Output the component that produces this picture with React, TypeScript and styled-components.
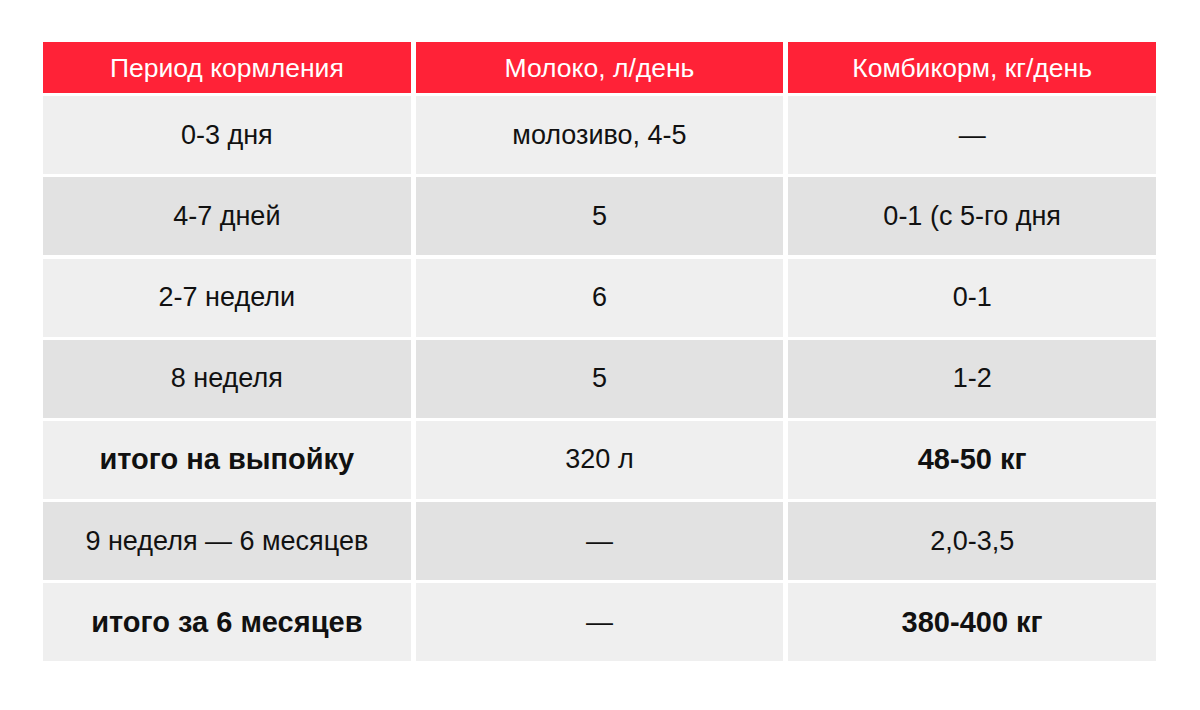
import React from "react";
import styled, { createGlobalStyle } from "styled-components";

const GlobalStyle = createGlobalStyle`
  html, body {
    margin: 0;
    padding: 0;
    background: #ffffff;
  }
  body {
    font-family: "Liberation Sans", Arial, sans-serif;
  }
`;

type Row = {
  period: string;
  milk: string;
  feed: string;
  boldPeriod?: boolean;
  boldFeed?: boolean;
};

const rows: Row[] = [
  { period: "0-3 дня", milk: "молозиво, 4-5", feed: "—" },
  { period: "4-7 дней", milk: "5", feed: "0-1 (с 5-го дня" },
  { period: "2-7 недели", milk: "6", feed: "0-1" },
  { period: "8 неделя", milk: "5", feed: "1-2" },
  {
    period: "итого на выпойку",
    milk: "320 л",
    feed: "48-50 кг",
    boldPeriod: true,
    boldFeed: true,
  },
  { period: "9 неделя — 6 месяцев", milk: "—", feed: "2,0-3,5" },
  {
    period: "итого за 6 месяцев",
    milk: "—",
    feed: "380-400 кг",
    boldPeriod: true,
    boldFeed: true,
  },
];

const App = () => {
  return (
    <>
      <GlobalStyle />
      <Page>
        <Table>
          <HeadCell>Период кормления</HeadCell>
          <HeadCell>Молоко, л/день</HeadCell>
          <HeadCell>Комбикорм, кг/день</HeadCell>
          {rows.map((r, i) => (
            <React.Fragment key={i}>
              <Cell $dark={i % 2 === 1} $bold={r.boldPeriod}>
                {r.period}
              </Cell>
              <Cell $dark={i % 2 === 1}>{r.milk}</Cell>
              <Cell $dark={i % 2 === 1} $bold={r.boldFeed}>
                {r.feed}
              </Cell>
            </React.Fragment>
          ))}
        </Table>
      </Page>
    </>
  );
};

export default App;

const Page = styled.div`
  width: 1200px;
  height: 710px;
  box-sizing: border-box;
  padding: 42px 0 0 43px;
`;

const Table = styled.div`
  width: 1113px;
  display: grid;
  grid-template-columns: 1fr 1fr 1fr;
  grid-template-rows: 51px repeat(7, 78px);
  column-gap: 5px;
  row-gap: 3.2px;
`;

const HeadCell = styled.div`
  background: #ff2237;
  color: #ffffff;
  display: flex;
  align-items: center;
  justify-content: center;
  font-size: 26.5px;
  padding-top: 1px;
`;

const Cell = styled.div<{ $dark?: boolean; $bold?: boolean }>`
  background: ${(p) => (p.$dark ? "#e2e2e2" : "#efefef")};
  color: #111111;
  display: flex;
  align-items: center;
  justify-content: center;
  font-size: ${(p) => (p.$bold ? "29px" : "27px")};
  font-weight: ${(p) => (p.$bold ? 700 : 400)};
`;
